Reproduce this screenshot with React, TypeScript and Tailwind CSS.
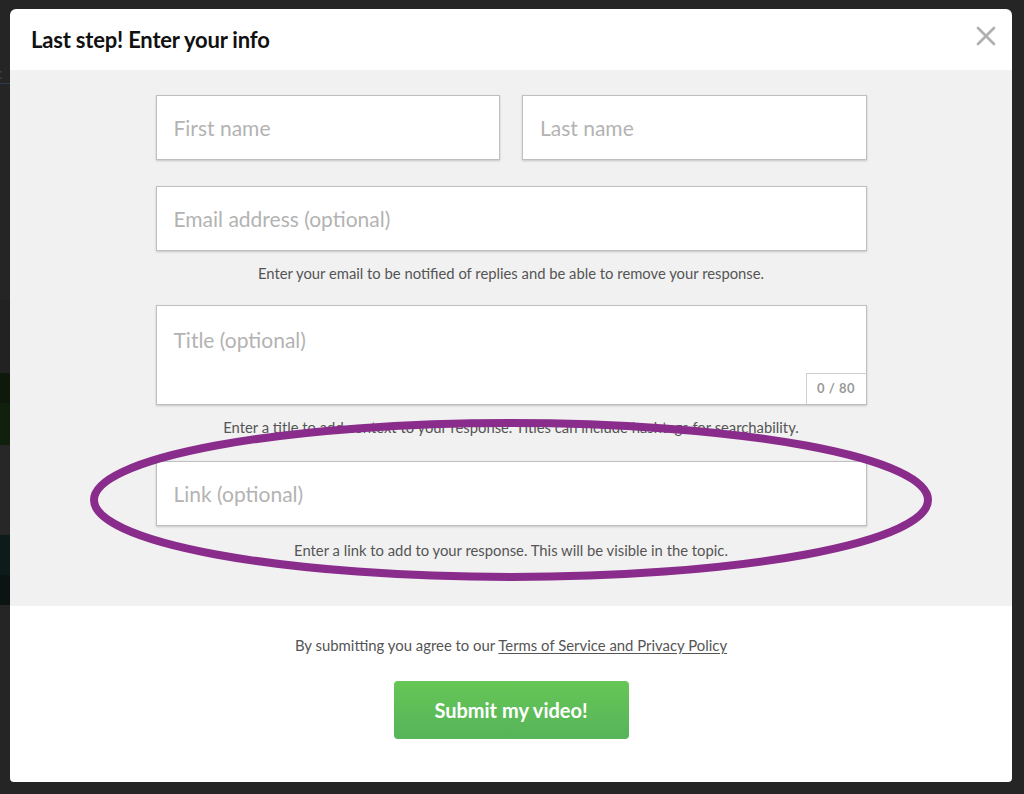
import { X } from "lucide-react";

const font = { fontFamily: "Lato, 'Open Sans', Arial, sans-serif" };

function Field({ placeholder, className = "" }: { placeholder: string; className?: string }) {
  return (
    <div
      className={`flex h-[65px] items-center border border-[#bfbfbf] bg-white px-[17px] shadow-[0_1px_2px_rgba(0,0,0,0.18)] ${className}`}
    >
      <span className="text-[21px] text-[#b3b3b3]">{placeholder}</span>
    </div>
  );
}

function Help({ children, className = "" }: { children: React.ReactNode; className?: string }) {
  return (
    <p className={`text-center text-[14.8px] leading-[18px] text-[#555] ${className}`}>{children}</p>
  );
}

function BackdropStrip() {
  // slice of the page that sits behind the dimmed overlay
  return (
    <div className="flex h-[794px] w-[10px] shrink-0 flex-col overflow-hidden bg-[#252525]">
      <div className="h-[62px]" />
      <div className="-ml-[14px] h-[22px] whitespace-nowrap border-b border-[#2f3a4a] text-[15px] text-[#3b4a5e]">
        tic
      </div>
      <div className="-ml-[14px] mt-[20px] h-[40px] whitespace-nowrap text-[28px] font-bold leading-[40px] text-[#050505]">
        il
      </div>
      <div className="-ml-[14px] mt-[32px] h-[24px] whitespace-nowrap text-[15px] text-[#4a4a4a]">Vi</div>
      <div className="-ml-[8px] mt-[34px] h-[24px] whitespace-nowrap text-[15px] text-[#4a4a4a]">v</div>
      <div className="mt-[42px] h-[73px] bg-[#222]" />
      <div className="h-[30px] bg-[#0e180b]" />
      <div className="h-[42px] bg-[#11200d]" />
      <div className="h-[90px] rounded-r-[6px] bg-[#272727]" />
      <div className="h-[40px] bg-[#0e1b1b]" />
      <div className="h-[30px] bg-[#0b1313]" />
    </div>
  );
}

export default function App() {
  return (
    <div className="flex h-[794px] w-[1024px] bg-[#252525]" style={font}>
      <BackdropStrip />
      <div className="mt-[9px] flex h-[773px] w-[1002px] flex-col overflow-hidden rounded-t-[6px] rounded-b-[4px] bg-white">
        <header className="flex h-[61px] shrink-0 items-center justify-between pl-[21px] pr-[10px]">
          <h2 className="text-[22px] font-bold tracking-[-0.2px] text-[#111]">Last step! Enter your info</h2>
          <X className="-mt-[7px] h-[32px] w-[32px] text-[#b0b0b0]" strokeWidth={2} />
        </header>

        <section className="relative bg-[#f1f1f1] pb-[47px] pt-[25px]">
          <div className="mx-auto w-[711px]">
            <div className="flex gap-[22px]">
              <Field placeholder="First name" className="flex-1" />
              <Field placeholder="Last name" className="flex-1" />
            </div>
            <Field placeholder="Email address (optional)" className="mt-[26px]" />
            <Help className="mt-[13px]">
              Enter your email to be notified of replies and be able to remove your response.
            </Help>

            <div className="relative mt-[23px] h-[100px] border border-[#bfbfbf] bg-white px-[17px] pt-[18px] shadow-[0_1px_2px_rgba(0,0,0,0.18)]">
              <span className="text-[21px] text-[#b3b3b3]">Title (optional)</span>
              <span className="absolute bottom-0 right-0 flex h-[31px] w-[60px] items-center justify-center border-l border-t border-[#cfcfcf] text-[13px] font-bold tracking-[0.5px] text-[#9a9a9a]">
                0 / 80
              </span>
            </div>
            <Help className="mt-[13px]">
              Enter a title to add context to your response. Titles can include hashtags for searchability.
            </Help>

            <Field placeholder="Link (optional)" className="mt-[25px]" />
            <Help className="mt-[15px]">
              Enter a link to add to your response. This will be visible in the topic.
            </Help>
          </div>

          <svg
            className="pointer-events-none absolute left-0 top-0 overflow-visible"
            width="1002"
            height="536"
            viewBox="0 0 1002 536"
          >
            <ellipse cx="501" cy="430" rx="417" ry="77" fill="none" stroke="#8a2c8c" strokeWidth="8" />
          </svg>
        </section>

        <footer className="flex flex-1 flex-col items-center pt-[30px]">
          <p className="text-[14.9px] leading-[18px] text-[#555]">
            By submitting you agree to our{" "}
            <a className="text-[#555] underline underline-offset-2">Terms of Service and Privacy Policy</a>
          </p>
          <button className="mt-[27px] h-[58px] w-[235px] rounded-[4px] bg-gradient-to-b from-[#66c655] to-[#56b45a] text-[20px] font-bold text-white">
            Submit my video!
          </button>
        </footer>
      </div>
    </div>
  );
}
